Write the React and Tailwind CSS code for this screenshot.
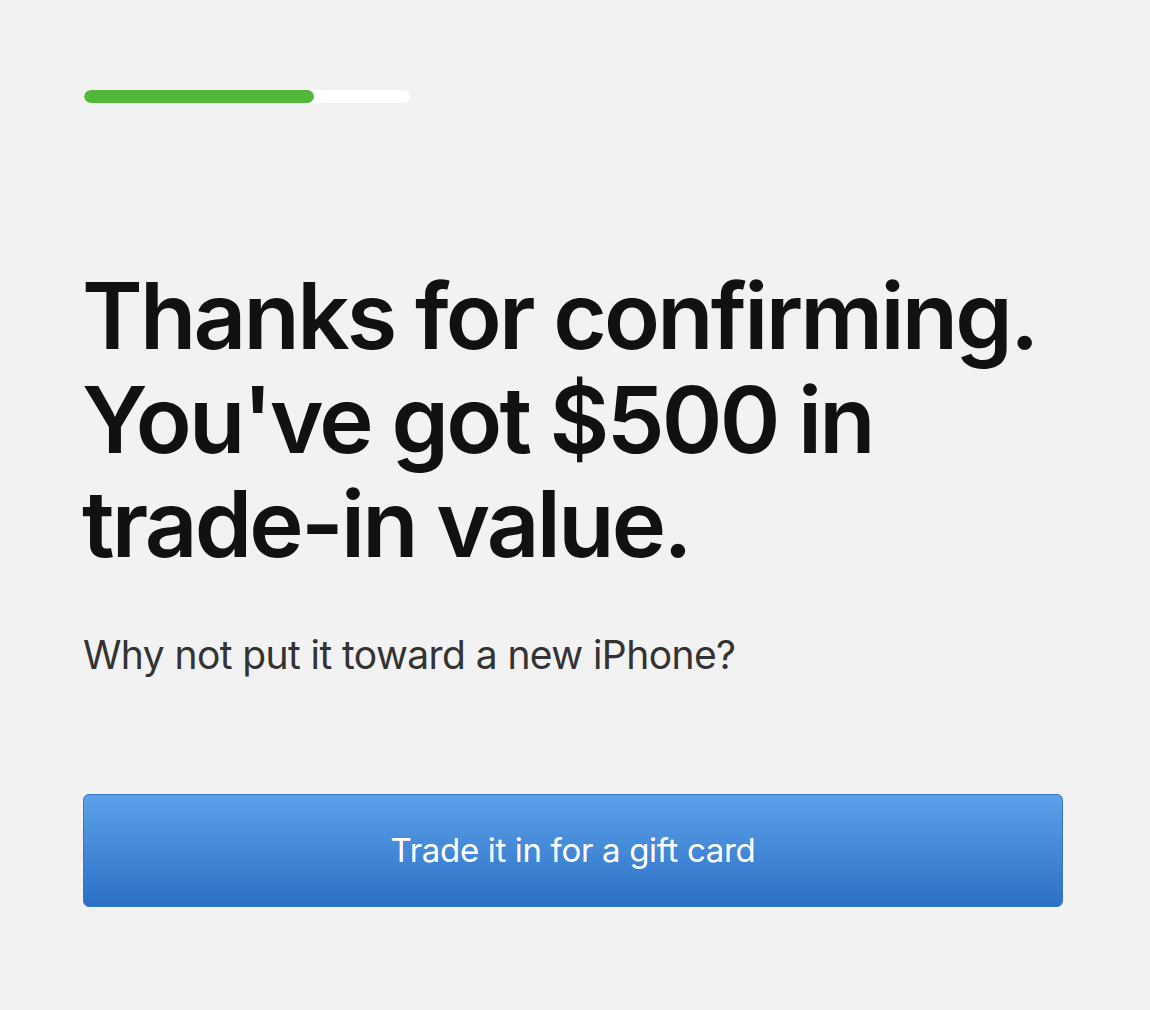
import React from 'react';

const ProgressBar = ({ value }) => (
  <div className="w-[326px] h-[13px] rounded-full bg-white overflow-hidden">
    <div className="h-full rounded-full bg-[#52b83a]" style={{ width: `${value * 100}%` }} />
  </div>
);

const App = () => {
  return (
    <div
      className="min-h-[1010px] w-full bg-[#f2f2f2] pl-[84px] pr-[88px] pt-[90px]"
      style={{ fontFamily: 'Inter, "Noto Sans", sans-serif' }}
    >
      <ProgressBar value={230 / 326} />

      <h1 className="mt-[161px] -ml-[2px] whitespace-nowrap text-[92px] leading-[104px] font-semibold tracking-[-0.03em] text-[#111111]">
        Thanks for confirming.
        <br />
        You've got $500 in
        <br />
        trade-in value.
      </h1>

      <p className="mt-[55px] -ml-[1px] text-[39px] leading-[48px] text-[#333333] tracking-[-0.015em]">
        Why not put it toward a new iPhone?
      </p>

      <button
        type="button"
        className="mt-[115px] -ml-px w-[980px] h-[113px] rounded-[6px] border border-[#3677cc] bg-gradient-to-b from-[#5ca1e8] to-[#2c70c6] text-white text-[33px] tracking-[-0.01em]"
      >
        Trade it in for a gift card
      </button>
    </div>
  );
};

export default App;
